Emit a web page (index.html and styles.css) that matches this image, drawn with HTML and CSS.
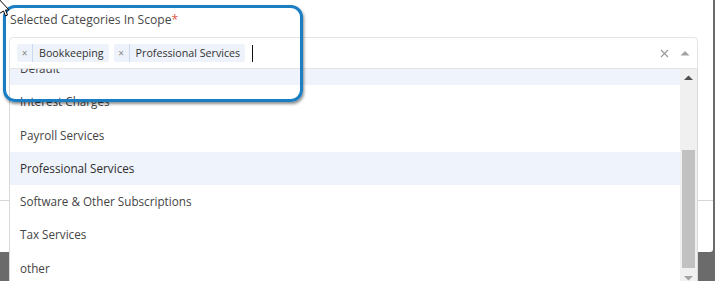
FILE: index.html
```html
<!DOCTYPE html>
<html>
<head>
<meta charset="utf-8">
<link rel="stylesheet" href="styles.css">
</head>
<body>
<div class="modal">
  <div class="modal-body">
    <div class="field-label">Selected Categories In Scope<span class="req">*</span></div>
    <div class="select">
      <div class="control">
        <div class="values">
          <span class="tag"><span class="tag-x">×</span><span class="tag-text">Bookkeeping</span></span>
          <span class="tag"><span class="tag-x">×</span><span class="tag-text">Professional Services</span></span>
          <span class="caret"></span>
        </div>
        <div class="indicators">
          <svg class="clear" width="9" height="9" viewBox="0 0 9 9"><path d="M1 1 L8 8 M8 1 L1 8" stroke="#9a9a9a" stroke-width="1.2" fill="none"/></svg>
          <svg class="arrow" width="10" height="6" viewBox="0 0 10 6"><path d="M0.5 5.5 L5 1 L9.5 5.5 Z" fill="#a3a3a3"/></svg>
        </div>
      </div>
      <div class="menu">
        <div class="options">
          <div class="option focused">Default</div>
          <div class="option">Interest Charges</div>
          <div class="option">Payroll Services</div>
          <div class="option selected">Professional Services</div>
          <div class="option">Software &amp; Other Subscriptions</div>
          <div class="option">Tax Services</div>
          <div class="option">other</div>
        </div>
        <div class="scrollbar">
          <div class="sb-btn"><svg width="9" height="5" viewBox="0 0 9 5"><path d="M0 5 L4.5 0.5 L9 5 Z" fill="#505050"/></svg></div>
          <div class="sb-track"><div class="sb-thumb"></div></div>
          <div class="sb-btn"><svg width="9" height="5" viewBox="0 0 9 5"><path d="M0 0 L4.5 4.5 L9 0 Z" fill="#a3a3a3"/></svg></div>
        </div>
      </div>
    </div>
  </div>
  <div class="modal-footer"></div>
</div>
<div class="annotation"></div>
<svg class="cursor" width="12" height="18" viewBox="0 0 12 18"><path d="M-3 -3 L9 10 L5.5 10 L7.5 15 L5.5 16 L3.5 11 L-3 15 Z" fill="#fff" stroke="#000" stroke-width="1"/></svg>
</body>
</html>
```
FILE: styles.css
```css
html, body {
  margin: 0;
  padding: 0;
}
body {
  width: 715px;
  height: 281px;
  overflow: hidden;
  background: #6b6b6b;
  font-family: "Open Sans", "Noto Sans", sans-serif;
  color: #3d3d3d;
  position: relative;
}
.modal {
  width: 713px;
  height: 252px;
  background: #fff;
  border-bottom-right-radius: 3px;
  display: flex;
  flex-direction: column;
}
.modal-body {
  padding: 12px 15px 0 9px;
  height: 188px;
}
.modal-footer {
  flex: 1;
  border-top: 1px solid #d6d6d6;
}
.field-label {
  font-size: 12.1px;
  line-height: 16px;
  color: #484848;
  margin-bottom: 9px;
  padding-left: 1px;
}
.req {
  color: #e2574c;
}
.select {
  position: relative;
}
.control {
  height: 30px;
  border: 1px solid #e4e4e4;
  border-radius: 4px 4px 0 0;
  display: flex;
  align-items: center;
  padding-left: 7px;
  background: #fff;
}
.values {
  flex: 1;
  display: flex;
  align-items: center;
  gap: 5px;
}
.tag {
  display: flex;
  align-items: stretch;
  height: 18px;
  background: #edf2fb;
  border-radius: 2px;
  font-size: 10.7px;
  line-height: 18px;
  color: #333;
}
.tag-x {
  width: 15px;
  text-align: center;
  color: #888;
  font-size: 10px;
  border-right: 1px solid #cbd9f1;
}
.tag-text {
  padding: 0 5px 0 6px;
}
.caret {
  width: 1px;
  height: 17px;
  background: #111;
  margin-left: 2px;
}
.indicators {
  display: flex;
  align-items: center;
  gap: 11px;
  padding-right: 7px;
}
.menu {
  position: absolute;
  top: 100%;
  left: 0;
  right: 0;
  height: 218px;
  background: #fff;
  border-left: 1px solid #d9d9d9;
  border-right: 1px solid #d9d9d9;
  display: flex;
  overflow: hidden;
  z-index: 2;
}
.options {
  flex: 1;
  margin-top: -17px;
}
.option {
  height: 33.3px;
  line-height: 33.3px;
  padding-left: 10px;
  font-size: 11.7px;
  color: #444;
}
.option.focused {
  background: #eef3fc;
}
.option.selected {
  background: #eef3fc;
  color: #2e2e2e;
  font-weight: 500;
}
.scrollbar {
  width: 17px;
  background: #f0f0f0;
  display: flex;
  flex-direction: column;
}
.sb-btn {
  height: 17px;
  display: flex;
  align-items: center;
  justify-content: center;
}
.sb-track {
  flex: 1;
  padding: 64px 2px 0 2px;
}
.sb-thumb {
  height: 118px;
  background: #c1c1c1;
}
.annotation {
  position: absolute;
  left: 3px;
  top: 5px;
  width: 294px;
  height: 91px;
  border: 3px solid #1b7ec3;
  border-radius: 12px;
  box-shadow: 1px 2px 3px rgba(0, 0, 0, 0.45);
  z-index: 3;
}
.cursor {
  position: absolute;
  left: 0;
  top: 0;
  z-index: 4;
}
```
